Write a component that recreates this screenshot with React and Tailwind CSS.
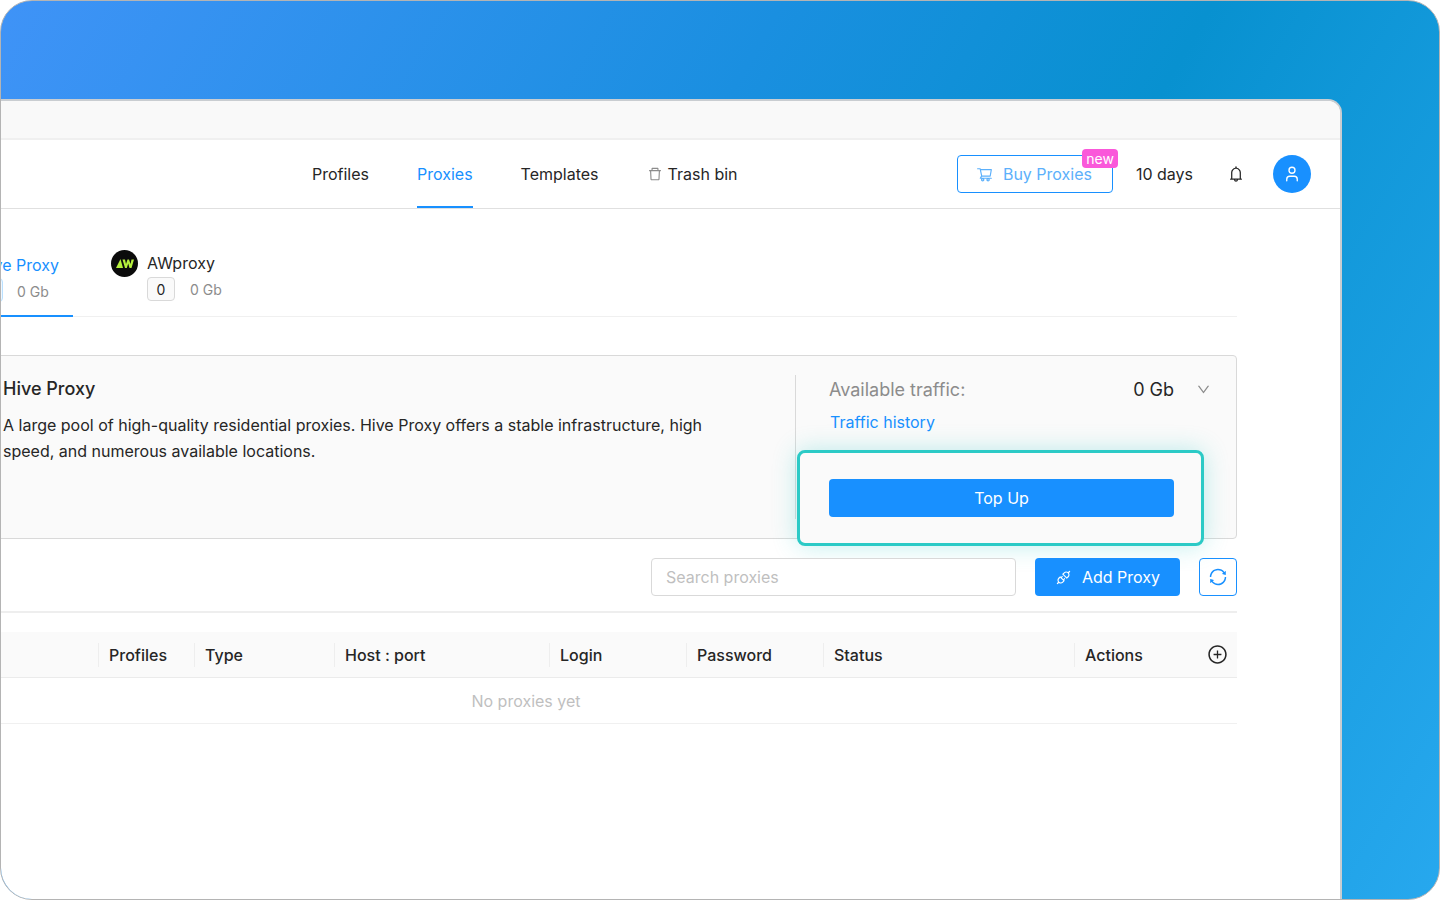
import { AiOutlineShoppingCart, AiOutlineBell, AiOutlineDown, AiOutlineApi, AiOutlineSync, AiOutlinePlusCircle, AiOutlineDelete } from "react-icons/ai";
import { User } from "lucide-react";

// table columns, the first one runs off the left side of the window
const columns = [
  { label: "", width: "w-[283px]" },
  { label: "Profiles", width: "w-[96px]" },
  { label: "Type", width: "w-[140px]" },
  { label: "Host : port", width: "w-[215px]" },
  { label: "Login", width: "w-[137px]" },
  { label: "Password", width: "w-[137px]" },
  { label: "Status", width: "w-[251px]" },
];

function AwLogo() {
  return (
    <svg width="27" height="27" viewBox="0 0 27 27" className="shrink-0">
      <circle cx="13.5" cy="13.5" r="13.5" fill="#0b0b0b" />
      <path d="M5 18 L9.5 9 L12 18 Z" fill="#b5f03c" />
      <path d="M11.5 9.5 H14 L15 14 L16.5 9.5 H18 L19.5 14 L20.5 9.5 H23 L20.5 18 H18.5 L17.2 13.5 L15.8 18 H14 Z" fill="#b5f03c" />
    </svg>
  );
}

export default function App() {
  return (
    <div className="w-[1440px] h-[900px] bg-white overflow-hidden" style={{ fontFamily: "Inter, sans-serif" }}>
      <div className="w-full h-full rounded-[32px] border border-[#b4b4b4] overflow-hidden pt-[98px] bg-[linear-gradient(120deg,#3f93f7_0%,#1a8fe0_40%,#0891d0_62%,#27a8ee_100%)]">
        <div className="w-[1341px] h-[802px] bg-white rounded-tr-[14px] border-t-2 border-r-2 border-[#c9cdd1] overflow-hidden text-[#262626] text-[16px]">
          {/* Title strip */}
          <div className="h-[39px] bg-[#f9f9f9] border-b-2 border-[#f0f0f0]" />

          {/* Top nav */}
          <div className="h-[69px] border-b border-[#e0e0e0] flex items-center pl-[311px] pr-[29px]">
            <span className="mr-[48px]">Profiles</span>
            <span className="relative h-full flex items-center text-[#1890ff] mr-[48px]">
              Proxies
              <span className="absolute left-0 right-0 bottom-0 h-[2px] bg-[#1890ff]" />
            </span>
            <span className="mr-[48px]">Templates</span>
            <span className="flex items-center gap-[5px]">
              <AiOutlineDelete size={16} className="text-[#8c8c8c]" />
              Trash bin
            </span>
            <button className="relative ml-auto w-[156px] h-[38px] flex items-center pl-[18px] gap-[10px] border border-[#1890ff] rounded text-[#5cb0fb]">
              <AiOutlineShoppingCart size={17} />
              Buy Proxies
              <span className="absolute right-[-6px] top-[-7px] h-[19px] px-[4px] rounded bg-[#fa58da] text-white text-[14px] leading-[19px]">new</span>
            </button>
            <span className="ml-[23px]">10 days</span>
            <AiOutlineBell size={18} className="ml-[34px] text-[#262626]" />
            <span className="ml-[28px] w-[38px] h-[38px] rounded-full bg-[#1890ff] flex items-center justify-center text-white">
              <User size={18} strokeWidth={1.8} />
            </span>
          </div>

          <div className="relative -ml-[186px] w-[1422px]">
            {/* Provider tabs */}
            <div className="h-[108px] border-b border-[#f0f0f0] flex">
              <div className="relative w-[258px] h-full">
                <div className="absolute right-[14px] top-[44px] text-[#1890ff] whitespace-nowrap">Hive Proxy</div>
                <div className="absolute left-[170px] top-[69px] w-[18px] h-[24px] rounded border border-[#bae0ff] bg-[#f0f8ff]" />
                <div className="absolute left-[202px] top-[72px] text-[14px] text-[#8c8c8c]">0 Gb</div>
                <span className="absolute left-0 right-0 bottom-[-1px] h-[2px] bg-[#1890ff]" />
              </div>
              <div className="ml-[38px] pt-[41px] flex gap-[9px]">
                <AwLogo />
                <div className="pt-[3px]">
                  <div className="leading-[20px]">AWproxy</div>
                  <div className="mt-[4px] flex items-center gap-[15px]">
                    <span className="w-[28px] h-[24px] rounded border border-[#d9d9d9] bg-[#fafafa] flex items-center justify-center text-[14px]">0</span>
                    <span className="text-[14px] text-[#8c8c8c]">0 Gb</span>
                  </div>
                </div>
              </div>
            </div>

            {/* Provider card */}
            <div className="relative mt-[38px] h-[184px] border border-[#d9d9d9] rounded bg-[#fafafa] flex pl-[187px] pt-[19px]">
              <div className="w-[793px] h-[144px] border-r border-[#d9d9d9] pr-[60px]">
                <div className="text-[18px] font-medium leading-[28px] mt-[0px]">Hive Proxy</div>
                <p className="mt-[9px] leading-[26px]">A large pool of high-quality residential proxies. Hive Proxy offers a stable infrastructure, high speed, and numerous available locations.</p>
              </div>
              <div className="w-[345px] ml-[33px]">
                <div className="flex items-center h-[28px]">
                  <span className="text-[18px] text-[#8c8c8c]">Available traffic:</span>
                  <span className="ml-auto text-[18px]">0 Gb</span>
                </div>
                <div className="mt-[7px] ml-[1px] leading-[24px] text-[#1890ff]">Traffic history</div>
              </div>
              <AiOutlineDown size={15} className="absolute right-[25px] top-[26px] text-[#8c8c8c]" />

              {/* Highlighted action */}
              <div className="absolute right-[32px] top-[94px] w-[407px] h-[96px] border-[3px] border-[#2bcac6] rounded-lg bg-[#fafafa] shadow-[0_0_24px_rgba(43,202,198,0.3)] pt-[26px] pl-[29px]">
                <button className="w-[345px] h-[38px] rounded bg-[#1890ff] text-white">Top Up</button>
              </div>
            </div>

            {/* Search and actions */}
            <div className="relative mt-[19px] pb-[15px] border-b-2 border-[#eeeeee] flex justify-end gap-[19px] w-[1422px]">
              <div className="w-[365px] h-[38px] rounded border border-[#d9d9d9] bg-white flex items-center px-[14px] text-[#bfbfbf]">Search proxies</div>
              <button className="w-[145px] h-[38px] rounded bg-[#1890ff] text-white flex items-center justify-center gap-[10px]">
                <AiOutlineApi size={17} />
                Add Proxy
              </button>
              <button className="w-[38px] h-[38px] rounded border border-[#1890ff] text-[#1890ff] flex items-center justify-center">
                <AiOutlineSync size={20} />
              </button>
            </div>

            {/* Proxies table */}
            <div className="mt-[19px]">
              <div className="h-[46px] bg-[#fafafa] border-b border-[#ebebeb] flex items-center">
                {columns.map((col, i) => (
                  <div key={i} className={`${col.width} h-[24px] flex items-center pl-[10px] font-medium ${i > 0 ? "border-l border-[#eeeeee]" : ""}`}>
                    {col.label}
                  </div>
                ))}
                <div className="flex-1 h-[24px] flex items-center pl-[10px] pr-[9px] justify-between border-l border-[#eeeeee] font-medium">
                  Actions
                  <AiOutlinePlusCircle size={21} />
                </div>
              </div>
              <div className="h-[46px] border-b border-[#f0f0f0] flex items-center justify-center text-[#bfbfbf]">No proxies yet</div>
            </div>
          </div>
        </div>
      </div>
    </div>
  );
}
